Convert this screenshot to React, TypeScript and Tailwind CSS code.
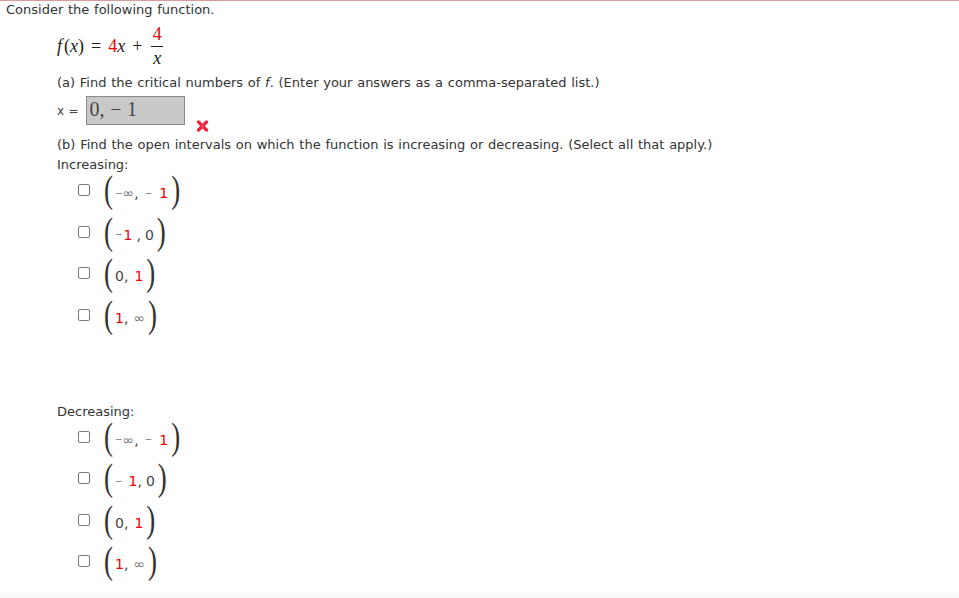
import React from 'react'

const sans = { fontFamily: '"DejaVu Sans", Verdana, sans-serif' }
const serif = { fontFamily: '"Liberation Serif", "Times New Roman", serif' }

// token: text, colour, left margin in px
type Tok = [string, 'red' | 'dim' | 'ink', number]

const incRows: Tok[][] = [
  [['−', 'dim', 0], ['∞', 'dim', 0], [',', 'ink', 0], ['−', 'dim', 6], ['1', 'red', 7]],
  [['−', 'dim', 0], ['1', 'red', 1], [',', 'ink', 4], ['0', 'ink', 4]],
  [['0', 'ink', 0], [',', 'ink', 0], ['1', 'red', 6]],
  [['1', 'red', 0], [',', 'ink', 0], ['∞', 'dim', 5]],
]

const decRows: Tok[][] = [
  [['−', 'dim', 0], ['∞', 'dim', 0], [',', 'ink', 0], ['−', 'dim', 6], ['1', 'red', 7]],
  [['−', 'dim', 0], ['1', 'red', 6], [',', 'ink', 0], ['0', 'ink', 4]],
  [['0', 'ink', 0], [',', 'ink', 0], ['1', 'red', 6]],
  [['1', 'red', 0], [',', 'ink', 0], ['∞', 'dim', 5]],
]

const tone = {
  red: 'text-[14px] text-[#ee0000]',
  dim: 'text-[14px] text-[#777]',
  ink: 'text-[14px] text-[#444]',
}

function Paren({ ch }: { ch: string }) {
  return (
    <span
      className="inline-block h-[20px] -translate-y-[1px] scale-y-[1.4] text-[27px] leading-[20px] text-[#333]"
      style={serif}
    >
      {ch}
    </span>
  )
}

function Interval({ toks }: { toks: Tok[] }) {
  return (
    <div className="flex h-[30px] items-center">
      <span className="ml-[21px] h-[12px] w-[12px] shrink-0 rounded-[2px] border border-[#7a7a7a] bg-white" />
      <span className="ml-[14px] flex items-center">
        <Paren ch="(" />
        <span className="ml-[2px] mr-[3px] flex translate-y-[3px] items-center leading-none">
          {toks.map(([t, c, m], i) => (
            <span key={i} className={t === '−' ? 'text-[9px] text-[#777]' : tone[c]} style={{ marginLeft: m }}>
              {t}
            </span>
          ))}
        </span>
        <Paren ch=")" />
      </span>
    </div>
  )
}

function WrongMark() {
  return (
    <svg width="13" height="12" viewBox="0 0 13 12" className="ml-[11px] mt-[24px]">
      <path d="M2.5 2 L10.5 10 M10.5 2 L2.5 10" stroke="#f0243f" strokeWidth="3.2" strokeLinecap="round" />
      <path d="M6.5 4.5 L6.5 7.5" stroke="#ff6b7d" strokeWidth="1" />
    </svg>
  )
}

export default function App() {
  return (
    <div
      className="flex h-[598px] w-[959px] flex-col bg-white text-[13px] text-[#333] [word-spacing:0.6px]"
      style={sans}
    >
      <div className="h-[593px] border-t border-[#d79d9d]">
        <p className="ml-[6px] h-[18px] leading-[18px]">Consider the following function.</p>

        <div className="ml-[57px] mt-[5px] flex h-[44px] items-center text-[18px] text-[#222]" style={serif}>
          <span className="italic">f</span>
          <span className="ml-[2px]">(</span>
          <span className="italic">x</span>
          <span>)</span>
          <span className="mx-[7px]">=</span>
          <span className="text-[#ee0000]">4</span>
          <span className="italic">x</span>
          <span className="mx-[7px]">+</span>
          <span className="ml-[2px] inline-flex flex-col items-center">
            <span className="px-[1px] pb-[2px] leading-[20px] text-[#ee0000]">4</span>
            <span className="h-px w-[12px] bg-[#222]" />
            <span className="pt-px leading-[20px] italic">x</span>
          </span>
        </div>

        <p className="ml-[57px] mt-[6px] h-[18px] leading-[18px]">
          (a) Find the critical numbers of <i>f</i>. (Enter your answers as a comma-separated list.)
        </p>

        <div className="ml-[57px] mt-[4px] flex items-start">
          <div className="flex items-center">
            <span className="mr-[7px] text-[12px] text-[#444]">x =</span>
            <div
              className="flex h-[29px] w-[99px] items-start border border-[#8a8a8a] bg-[#c9c9c9] pl-[3px] pt-[1px] text-[20px] leading-[22px] text-[#444]"
              style={serif}
            >
              0, − 1
            </div>
          </div>
          <WrongMark />
        </div>

        <p className="ml-[57px] mt-[3px] h-[20px] leading-[20px]">
          (b) Find the open intervals on which the function is increasing or decreasing. (Select all that apply.)
        </p>
        <p className="ml-[57px] h-[20px] leading-[20px]">Increasing:</p>

        <div className="ml-[57px] flex flex-col gap-[11.5px]">
          {incRows.map((t, i) => (
            <Interval key={i} toks={t} />
          ))}
        </div>

        <p className="ml-[57px] mt-[72px] h-[20px] leading-[20px]">Decreasing:</p>

        <div className="ml-[57px] flex flex-col gap-[11.5px]">
          {decRows.map((t, i) => (
            <Interval key={i} toks={t} />
          ))}
        </div>
      </div>
      <div className="flex-1 bg-[#f8f8f8]" />
    </div>
  )
}
